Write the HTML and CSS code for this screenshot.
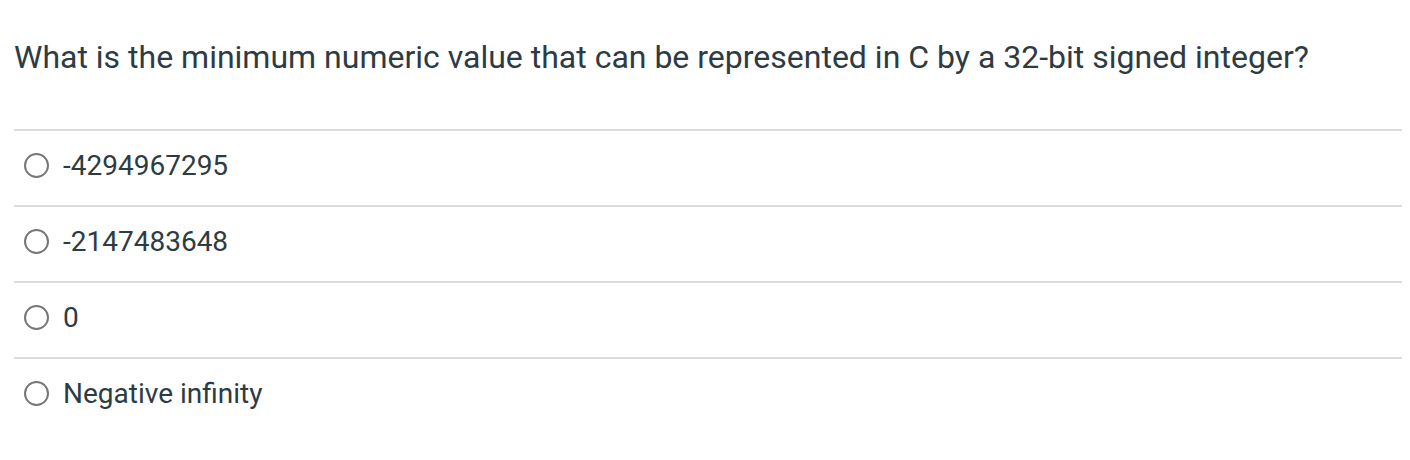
FILE: index.html
```html
<!DOCTYPE html>
<html>
<head>
<meta charset="utf-8">
<link rel="stylesheet" href="styles.css">
</head>
<body>
<div class="quiz">
  <div class="question">What is the minimum numeric value that can be represented in C by a 32-bit signed integer?</div>
  <div class="answers">
    <label class="answer"><span class="radio"></span><span class="text">-4294967295</span></label>
    <label class="answer"><span class="radio"></span><span class="text">-2147483648</span></label>
    <label class="answer"><span class="radio"></span><span class="text">0</span></label>
    <label class="answer"><span class="radio"></span><span class="text">Negative infinity</span></label>
  </div>
</div>
</body>
</html>
```
FILE: styles.css
```css
html, body {
  margin: 0;
  padding: 0;
  background: #fff;
}
body {
  font-family: Roboto, "Liberation Sans", sans-serif;
  color: #2d3b45;
}
.quiz {
  padding: 0 8px 0 14px;
}
.question {
  font-size: 32px;
  line-height: 40px;
  padding-top: 37px;
  height: 129px;
  box-sizing: border-box;
}
.answer {
  display: flex;
  align-items: center;
  height: 76px;
  border-top: 2px solid #dcdcdc;
  padding-bottom: 5px;
  box-sizing: border-box;
}
.radio {
  width: 25px;
  height: 25px;
  border: 2px solid #777;
  border-radius: 50%;
  box-sizing: border-box;
  margin-left: 10px;
  margin-right: 14px;
  flex: none;
}
.text {
  font-size: 28px;
  line-height: 34px;
}
```
